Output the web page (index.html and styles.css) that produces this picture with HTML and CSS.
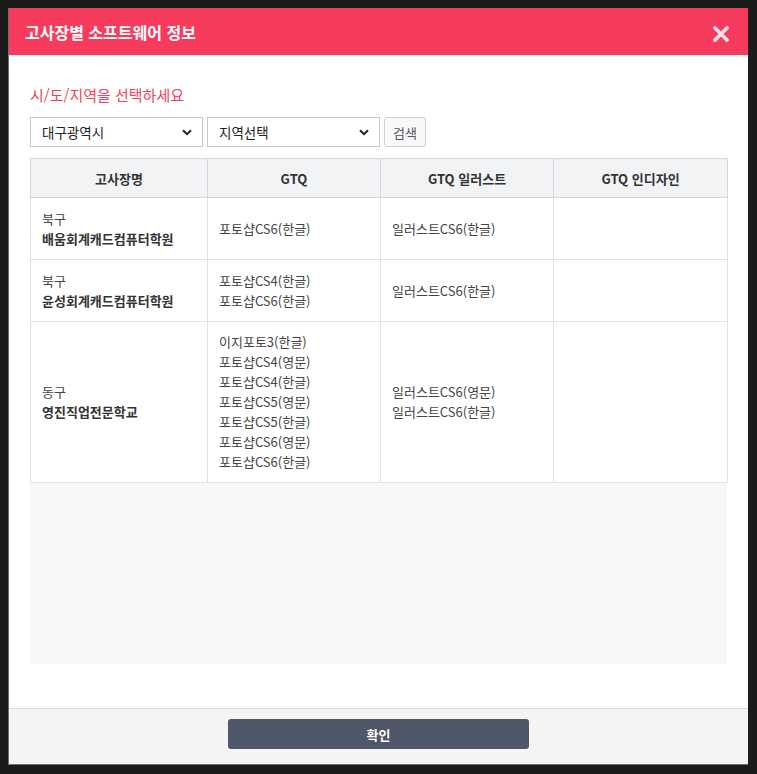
FILE: index.html
```html
<!DOCTYPE html>
<html lang="ko">
<head>
<meta charset="utf-8">
<link rel="stylesheet" href="styles.css">
</head>
<body>
<div class="modal">
  <div class="modal-head">
    <h1 class="title">고사장별 소프트웨어 정보</h1>
    <span class="close"><svg width="16" height="16" viewBox="0 0 16 16"><path d="M2 2L14 14M14 2L2 14" stroke="#ffe3e9" stroke-width="3.6" stroke-linecap="square"/></svg></span>
  </div>
  <div class="modal-body">
    <p class="label">시/도/지역을 선택하세요</p>
    <div class="filters">
      <div class="select sel1"><span>대구광역시</span><svg width="10" height="7" viewBox="0 0 10 7"><path d="M1 1.2L5 5.2L9 1.2" fill="none" stroke="#222" stroke-width="2"/></svg></div>
      <div class="select sel2"><span>지역선택</span><svg width="10" height="7" viewBox="0 0 10 7"><path d="M1 1.2L5 5.2L9 1.2" fill="none" stroke="#222" stroke-width="2"/></svg></div>
      <button class="search">검색</button>
    </div>
    <div class="table-wrap">
      <table class="grid">
        <thead>
          <tr><th class="c1">고사장명</th><th class="c2">GTQ</th><th class="c3">GTQ 일러스트</th><th class="c4">GTQ 인디자인</th></tr>
        </thead>
        <tbody>
          <tr>
            <td>북구<br><b>배움회계캐드컴퓨터학원</b></td>
            <td>포토샵CS6(한글)</td>
            <td>일러스트CS6(한글)</td>
            <td></td>
          </tr>
          <tr>
            <td>북구<br><b>윤성회계캐드컴퓨터학원</b></td>
            <td>포토샵CS4(한글)<br>포토샵CS6(한글)</td>
            <td>일러스트CS6(한글)</td>
            <td></td>
          </tr>
          <tr>
            <td>동구<br><b>영진직업전문학교</b></td>
            <td>이지포토3(한글)<br>포토샵CS4(영문)<br>포토샵CS4(한글)<br>포토샵CS5(영문)<br>포토샵CS5(한글)<br>포토샵CS6(영문)<br>포토샵CS6(한글)</td>
            <td>일러스트CS6(영문)<br>일러스트CS6(한글)</td>
            <td></td>
          </tr>
        </tbody>
      </table>
    </div>
  </div>
  <div class="modal-foot">
    <button class="ok">확인</button>
  </div>
</div>
</body>
</html>
```

FILE: styles.css
```css
* { box-sizing: border-box; }
html, body { margin: 0; padding: 0; }
body {
  background: #1b1b1b;
  font-family: "Noto Sans CJK KR", "Noto Sans", sans-serif;
  font-size: 13px;
  color: #444;
  height: 774px;
  overflow: hidden;
}
.modal {
  margin: 8px 0 0 8px;
  width: 740px;
  height: 757px;
  background: #fff;
  border-left: 1px solid #707070;
  border-bottom: 1px solid #707070;
  display: flex;
  flex-direction: column;
}
.modal-head {
  height: 47px;
  background: #f63b5c;
  display: flex;
  align-items: center;
  justify-content: space-between;
  padding: 0 19px 0 16px;
}
.title {
  margin: 0;
  color: #fff;
  font-size: 16px;
  font-weight: 700;
  line-height: 22px;
}
.close { display: flex; margin-top: 4px; }
.modal-body {
  flex: 1;
  padding: 30px 21px 0 21px;
}
.label {
  margin: 0 0 12px;
  color: #f43f5e;
  font-size: 15px;
  line-height: 20px;
}
.filters {
  display: flex;
  gap: 4px;
  height: 30px;
  margin-bottom: 11px;
}
.select {
  height: 30px;
  border: 1px solid #c5c5cf;
  background: #fff;
  display: flex;
  align-items: center;
  justify-content: space-between;
  padding: 0 10px 0 11px;
  color: #222;
  font-size: 13.5px;
}
.sel1 { width: 173px; }
.sel2 { width: 173px; }
.search {
  width: 42px;
  height: 30px;
  border: 1px solid #cfd0d8;
  border-radius: 3px;
  background: #f7f8fa;
  color: #555;
  font-family: inherit;
  font-size: 13px;
  padding: 0;
}
.table-wrap {
  width: 697px;
  height: 506px;
  background: #f8f8f8;
}
.grid {
  width: 697px;
  border-collapse: collapse;
  background: #fff;
  table-layout: fixed;
}
.grid th, .grid td {
  border: 1px solid #e2e2e6;
}
.grid th {
  height: 39px;
  background: #f2f3f5;
  border-color: #d6d7dd;
  color: #333;
  font-weight: 700;
  text-align: center;
}
.c1 { width: 177px; }
.c2, .c3 { width: 173px; }
.c4 { width: 174px; }
.grid td {
  height: 62px;
  padding: 10px 11px;
  line-height: 20px;
  vertical-align: middle;
  text-align: left;
  color: #444;
}
.grid td b { font-weight: 700; color: #333; }
.modal-foot {
  height: 56px;
  flex: none;
  background: #f4f4f4;
  border-top: 1px solid #dadada;
  display: flex;
  justify-content: center;
  padding-top: 10px;
}
.ok {
  width: 301px;
  height: 30px;
  background: #4f586b;
  border: 0;
  border-radius: 3px;
  color: #fff;
  font-family: inherit;
  font-size: 13px;
  font-weight: 700;
}
```
